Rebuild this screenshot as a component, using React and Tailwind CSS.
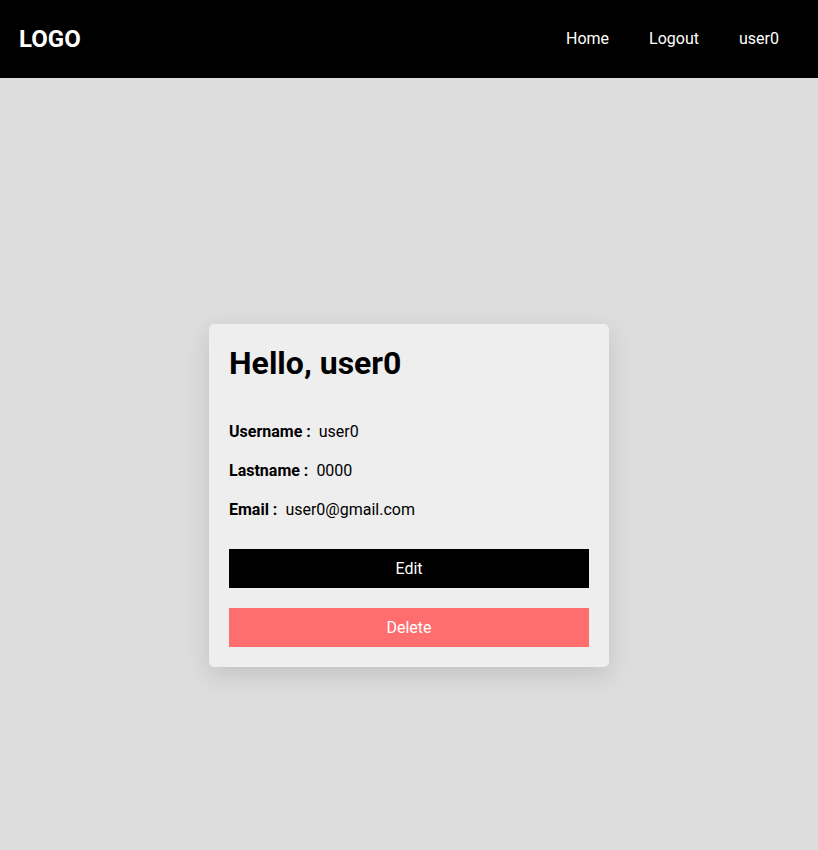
import React from 'react';

const NAV_LINKS = ['Home', 'Logout', 'user0'];

const InfoRow = ({ label, value }) => (
  <p className="h-[39px] flex items-center text-[16px] text-black">
    <span className="font-bold">{label} :</span>
    <span className="ml-2">{value}</span>
  </p>
);

const App = () => {
  return (
    <div className="min-h-screen bg-[#dddddd] font-['Roboto',sans-serif]">
      {/* Header */}
      <header className="h-[78px] bg-black flex items-center justify-between pl-[19px] pr-[19px]">
        <span className="text-white text-[24px] font-bold">LOGO</span>
        <nav className="flex items-center">
          {NAV_LINKS.map((link) => (
            <a key={link} className="text-white text-[16px] px-5 cursor-pointer">
              {link}
            </a>
          ))}
        </nav>
      </header>

      {/* Profile card */}
      <main className="flex justify-center pt-[246px]">
        <div className="w-[400px] bg-[#eeeeee] rounded-[5px] shadow-[0_8px_24px_rgba(0,0,0,0.12)] p-5">
          <h1 className="text-[32px] font-bold text-black leading-[37px] mt-[1px]">Hello, user0</h1>
          <div className="mt-[30px]">
            <InfoRow label="Username" value="user0" />
            <InfoRow label="Lastname" value="0000" />
            <InfoRow label="Email" value="user0@gmail.com" />
          </div>
          <div className="mt-[20px] flex flex-col gap-5">
            <button className="h-[39px] w-full bg-black text-white text-[16px]">Edit</button>
            <button className="h-[39px] w-full bg-[#fe6e6e] text-white text-[16px]">Delete</button>
          </div>
        </div>
      </main>
    </div>
  );
};

export default App;
